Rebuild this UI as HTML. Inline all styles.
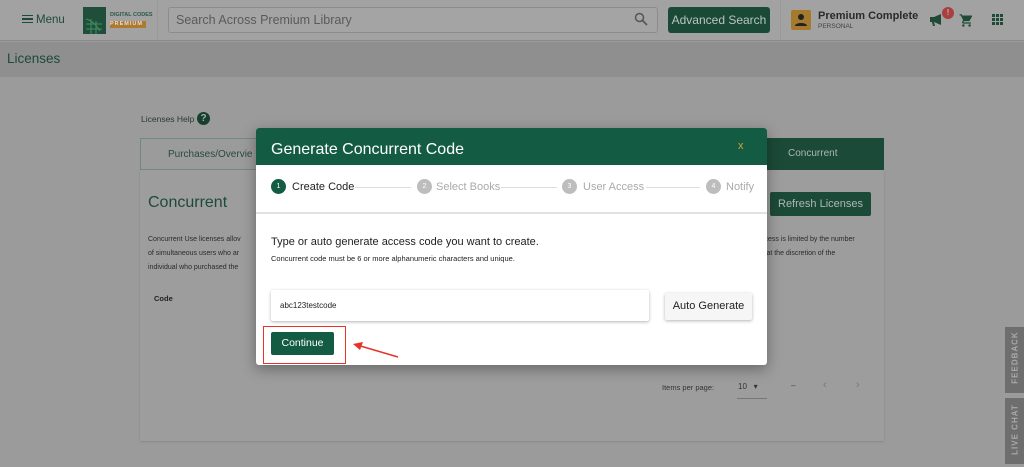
<!DOCTYPE html>
<html><head><meta charset="utf-8"><style>
*{box-sizing:border-box;margin:0;padding:0}
body{width:1024px;height:467px;overflow:hidden;background:#9b9b9b;font-family:"Liberation Sans",sans-serif;position:relative}
.a{position:absolute}
</style></head><body>
<div class="a" style="left:0;top:0;width:1024px;height:41px;background:#a2a2a2;border-bottom:1px solid #8a8a8a"></div>
<div class="a" style="left:157px;top:0;width:1px;height:40px;background:#999"></div>
<div class="a" style="left:780px;top:0;width:1px;height:40px;background:#999"></div>
<div class="a" style="left:22px;top:14px;font-size:11.5px;color:#1e4a38">
<span style="display:inline-block;width:11px;height:8px;border-top:1.5px solid #1e4a38;border-bottom:1.5px solid #1e4a38;position:relative;vertical-align:0px;margin-right:3px"><span style="position:absolute;left:0;top:2px;width:11px;height:1.5px;background:#1e4a38"></span></span>Menu</div>
<div class="a" style="left:83px;top:7px;width:23px;height:27px;background:#1f4f3a"></div>
<svg class="a" style="left:83px;top:7px" width="23" height="27" viewBox="0 0 23 27"><path d="M3 12q8 2 14 12M3 17h16M3 22h16M8 12v15M13 14v13" stroke="#8fa" stroke-opacity=".35" fill="none"/></svg>
<div class="a" style="left:110px;top:12px;font-size:5.5px;font-weight:bold;color:#2c5a45">DIGITAL CODES</div>
<div class="a" style="left:110px;top:21px;width:36px;height:7px;background:#b07a2c;font-size:5.5px;color:#ddd;font-weight:bold;letter-spacing:1px;line-height:7px">PREMIUM</div>
<div class="a" style="left:168px;top:7px;width:490px;height:26px;border:1px solid #8c8c8c;border-radius:3px;background:#a4a4a4"></div>
<div class="a" style="left:176px;top:13px;font-size:12.5px;color:#5a5a5a">Search Across Premium Library</div>
<svg class="a" style="left:634px;top:12px" width="14" height="14" viewBox="0 0 14 14"><circle cx="5.5" cy="5.5" r="4" fill="none" stroke="#555" stroke-width="1.5"/><path d="M8.5 8.5L13 13" stroke="#555" stroke-width="1.6"/></svg>
<div class="a" style="left:668px;top:7px;width:102px;height:26px;border-radius:3px;background:#1a4a37;color:#b9c4bf;font-size:12px;line-height:26px;text-align:center">Advanced Search</div>
<div class="a" style="left:791px;top:10px;width:20px;height:20px;border-radius:2px;background:#a67a2c"></div>
<svg class="a" style="left:795px;top:13px" width="12" height="14" viewBox="0 0 12 14"><circle cx="6" cy="4" r="3" fill="#222"/><path d="M0 13c0-4 12-4 12 0z" fill="#222"/></svg>
<div class="a" style="left:818px;top:10px;font-size:11px;font-weight:bold;color:#2a2a2a">Premium Complete</div>
<div class="a" style="left:818px;top:23px;font-size:6.5px;color:#444">PERSONAL</div>
<svg class="a" style="left:929px;top:13px" width="16" height="14" viewBox="0 0 16 14"><path d="M1 4h4l7-3v11l-7-3H1z M3 9l1 4h2l-1-4z" fill="#1e4a38"/></svg>
<div class="a" style="left:942px;top:7px;width:12px;height:12px;border-radius:6px;background:#a84040;color:#ddd;font-size:8px;text-align:center;line-height:12px">!</div>
<svg class="a" style="left:959px;top:13px" width="15" height="15" viewBox="0 0 24 24"><path fill="#1e4a38" d="M7 18c-1.1 0-2 .9-2 2s.9 2 2 2 2-.9 2-2-.9-2-2-2zM1 2v2h2l3.6 7.6-1.4 2.4c-.1.3-.2.6-.2 1 0 1.1.9 2 2 2h12v-2H7.4c-.1 0-.2-.1-.2-.2v-.1l.9-1.7h7.4c.8 0 1.4-.4 1.7-1l3.6-6.5c.1-.2.2-.3.2-.5 0-.6-.4-1-1-1H5.2l-.9-2zm16 16c-1.1 0-2 .9-2 2s.9 2 2 2 2-.9 2-2-.9-2-2-2z"/></svg>
<svg class="a" style="left:992px;top:14px" width="11" height="11" viewBox="0 0 11 11" fill="#1e4a38"><rect x="0" y="0" width="3" height="3"/><rect x="4" y="0" width="3" height="3"/><rect x="8" y="0" width="3" height="3"/><rect x="0" y="4" width="3" height="3"/><rect x="4" y="4" width="3" height="3"/><rect x="8" y="4" width="3" height="3"/><rect x="0" y="8" width="3" height="3"/><rect x="4" y="8" width="3" height="3"/><rect x="8" y="8" width="3" height="3"/></svg>
<div class="a" style="left:0;top:42px;width:1024px;height:35px;background:#8f8f8f"></div>
<div class="a" style="left:7px;top:51px;font-size:13.5px;color:#1e4a38">Licenses</div>
<div class="a" style="left:141px;top:114px;font-size:8.5px;color:#2a3a33">Licenses Help</div>
<div class="a" style="left:197px;top:112px;width:13px;height:13px;border-radius:7px;background:#163f2f;color:#aaa;font-size:10px;font-weight:bold;text-align:center;line-height:13px">?</div>
<div class="a" style="left:140px;top:170px;width:744px;height:271px;background:#9d9d9d;box-shadow:0 1px 2px #888;border-radius:2px"></div>
<div class="a" style="left:140px;top:138px;width:130px;height:32px;border:1px solid #6f8a7f;font-size:10px;color:#284a3b;line-height:31px;padding-left:27px">Purchases/Overvie</div>
<div class="a" style="left:760px;top:138px;width:124px;height:32px;background:#1c4a38;font-size:10px;color:#aab9b2;line-height:32px;padding-left:28px">Concurrent</div>
<div class="a" style="left:148px;top:194px;font-size:16px;color:#1e4a38">Concurrent</div>
<div class="a" style="left:770px;top:192px;width:101px;height:24px;background:#1c4a38;border-radius:2px;color:#aab9b2;font-size:11px;line-height:24px;text-align:center">Refresh Licenses</div>
<div class="a" style="left:148px;top:233px;font-size:7px;color:#2a2a2a;line-height:14px">Concurrent Use licenses allov<br>of simultaneous users who ar<br>individual who purchased the</div>
<div class="a" style="left:761px;top:233px;font-size:7px;color:#2a2a2a;line-height:14px">ccess is limited by the number<br>y at the discretion of the</div>
<div class="a" style="left:154px;top:294px;font-size:7.5px;font-weight:bold;color:#222">Code</div>
<div class="a" style="left:662px;top:383px;font-size:7.5px;color:#333">Items per page:</div>
<div class="a" style="left:738px;top:382px;font-size:8px;color:#333">10 &nbsp; &#9662;</div>
<div class="a" style="left:737px;top:398px;width:30px;height:1px;background:#777"></div>
<div class="a" style="left:791px;top:381px;font-size:8px;color:#444">–</div>
<div class="a" style="left:823px;top:379px;font-size:11px;color:#777">&#8249;</div>
<div class="a" style="left:856px;top:379px;font-size:11px;color:#777">&#8250;</div>
<div class="a" style="left:1005px;top:327px;width:19px;height:66px;background:#6e6e6e"></div>
<div class="a" style="left:1005px;top:398px;width:19px;height:66px;background:#6e6e6e"></div>
<div class="a" style="left:983px;top:353px;width:64px;transform:rotate(-90deg);font-size:8px;color:#aaa;letter-spacing:1px;text-align:center;font-weight:bold">FEEDBACK</div>
<div class="a" style="left:983px;top:425px;width:64px;transform:rotate(-90deg);font-size:8px;color:#aaa;letter-spacing:1px;text-align:center;font-weight:bold">LIVE CHAT</div>
<div class="a" style="left:256px;top:128px;width:511px;height:237px;background:#fff;border-radius:3px;box-shadow:0 4px 14px rgba(0,0,0,.35);overflow:hidden">
<div style="height:37px;background:#135c43;color:#fff;font-size:16px;padding:13px 0 0 15px;position:relative">Generate Concurrent Code<span style="position:absolute;left:482px;top:12px;font-size:11px;color:#d4a23a">x</span></div>
<div style="position:relative;height:49px;border-bottom:2px solid #e2e2e2;font-size:11px">
<div class="a" style="left:15px;top:14px;width:15px;height:15px;border-radius:8px;background:#135c43;color:#fff;font-size:7px;text-align:center;line-height:15px">1</div>
<div class="a" style="left:36px;top:16px;color:#222">Create Code</div>
<div class="a" style="left:99px;top:22px;width:56px;height:1px;background:#ddd"></div>
<div class="a" style="left:161px;top:14px;width:15px;height:15px;border-radius:8px;background:#bdbdbd;color:#fff;font-size:7px;text-align:center;line-height:15px">2</div>
<div class="a" style="left:180px;top:16px;color:#aaa">Select Books</div>
<div class="a" style="left:245px;top:22px;width:56px;height:1px;background:#ddd"></div>
<div class="a" style="left:306px;top:14px;width:15px;height:15px;border-radius:8px;background:#bdbdbd;color:#fff;font-size:7px;text-align:center;line-height:15px">3</div>
<div class="a" style="left:327px;top:16px;color:#aaa">User Access</div>
<div class="a" style="left:390px;top:22px;width:54px;height:1px;background:#ddd"></div>
<div class="a" style="left:450px;top:14px;width:15px;height:15px;border-radius:8px;background:#bdbdbd;color:#fff;font-size:7px;text-align:center;line-height:15px">4</div>
<div class="a" style="left:470px;top:16px;color:#aaa">Notify</div>
</div>
<div class="a" style="left:15px;top:108px;font-size:11px;color:#222">Type or auto generate access code you want to create.</div>
<div class="a" style="left:15px;top:126px;font-size:7.5px;color:#222">Concurrent code must be 6 or more alphanumeric characters and unique.</div>
<div class="a" style="left:15px;top:162px;width:378px;height:31px;background:#fff;box-shadow:0 1px 3px rgba(0,0,0,.3);border-radius:2px;font-size:8px;color:#222;padding:11px 0 0 9px">abc123testcode</div>
<div class="a" style="left:409px;top:165px;width:87px;height:27px;background:#f6f6f6;box-shadow:0 1px 3px rgba(0,0,0,.3);border-radius:2px;font-size:11px;color:#222;line-height:27px;text-align:center">Auto Generate</div>
<div class="a" style="left:7px;top:198px;width:83px;height:38px;border:1.5px solid #e8332a"></div>
<div class="a" style="left:15px;top:204px;width:63px;height:23px;background:#135c43;border-radius:2px;font-size:10.5px;color:#fff;line-height:23px;text-align:center">Continue</div>
</div>
<svg class="a" style="left:345px;top:335px" width="60" height="30" viewBox="0 0 60 30"><path d="M53 22L12 10" stroke="#e8332a" stroke-width="1.6"/><path d="M8 9l10-2-3 8z" fill="#e8332a"/></svg>
</body></html>
